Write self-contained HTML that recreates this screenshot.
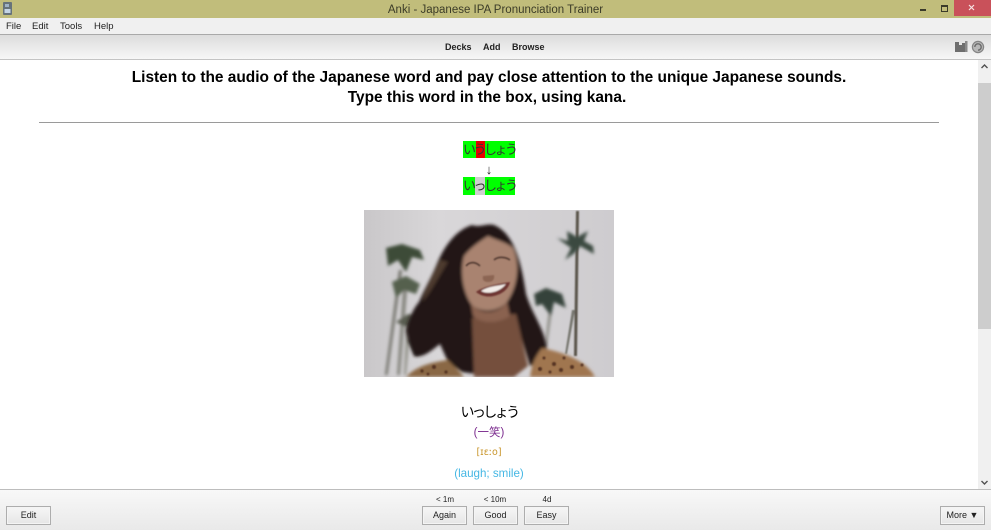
<!DOCTYPE html>
<html lang="en"><head><meta charset="utf-8"><title>Anki - Japanese IPA Pronunciation Trainer</title>
<style>
html,body{margin:0;padding:0;background:#fff}
body{width:991px;height:530px;position:relative;overflow:hidden;font-family:"Liberation Sans",sans-serif;color:#000}
.a{position:absolute;white-space:nowrap}
.c{position:absolute;left:0;width:978px;text-align:center;white-space:nowrap}
#title{left:0;top:0;width:991px;height:18px;background:#c1bd7b}
#menu{left:0;top:18px;width:991px;height:16px;background:#f0f0f0;border-bottom:1px solid #a9a9a9;font-size:9.5px;color:#222}
#tool{left:0;top:35px;width:991px;height:24px;background:linear-gradient(#dcdcdc,#f7f7f7);border-bottom:1px solid #c4c4c4}
.btn{position:absolute;top:506px;height:17px;border:1px solid #adadad;background:linear-gradient(#f6f6f6,#e6e6e6);font-size:9px;line-height:17px;text-align:center;color:#222;box-shadow:inset 0 0 0 1px #f4f4f4}
.t{position:absolute;top:495px;font-size:8px;color:#222;width:46px;text-align:center}
.k{font-family:"Liberation Sans","Noto Sans CJK JP",sans-serif}
</style></head><body>
<div class="a" id="title"></div>
<svg class="a" style="left:2px;top:2px" width="11" height="13"><rect x="1" y="0" width="9" height="13" rx="1" fill="#66727a"/><rect x="2.5" y="7" width="6" height="4" fill="#c4d4e4"/><rect x="3" y="2" width="4" height="3" fill="#9fb2c6"/></svg>
<div class="a" style="left:0;width:991px;top:3px;text-align:center;font-size:11.5px;color:#3c3c28;line-height:14px">Anki - Japanese IPA Pronunciation Trainer</div>
<div class="a" style="left:920px;top:9px;width:6px;height:1.5px;background:#3a3a2a"></div>
<div class="a" style="left:941px;top:5px;width:5px;height:4px;border:1px solid #3a3a2a;border-top-width:2px"></div>
<div class="a" style="left:954px;top:0;width:37px;height:16px;background:#c9515a"></div>
<svg class="a" style="left:967px;top:3px" width="9" height="9"><path d="M2 2L7 7M7 2L2 7" stroke="#f6e4e4" stroke-width="1.2"/></svg>

<div class="a" id="menu">
<span class="a" style="left:6px;top:3px">File</span><span class="a" style="left:32px;top:3px">Edit</span><span class="a" style="left:60px;top:3px">Tools</span><span class="a" style="left:94px;top:3px">Help</span>
</div>
<div class="a" id="tool">
<b class="a" style="left:445px;top:7px;font-size:9px;color:#222">Decks</b>
<b class="a" style="left:483px;top:7px;font-size:9px;color:#222">Add</b>
<b class="a" style="left:512px;top:7px;font-size:9px;color:#222">Browse</b>
<svg class="a" style="left:954px;top:5px" width="34" height="14"><path d="M1 2h4v10H1zM5 5h3v7H5zM8 3h3v9H8z" fill="#6e6e6e"/><path d="M11 1h2.500v11H11z" fill="#8a8a8a"/><circle cx="24" cy="7" r="5.600" fill="#b8b8b8" stroke="#858585" stroke-width="1.2"/><path d="M20.800 7a3.200 3.200 0 1 1 3.200 3.200" fill="none" stroke="#6a6a6a" stroke-width="1.4"/></svg>
</div>

<div class="a" style="left:978px;top:60px;width:13px;height:429px;background:#f0f0f0"></div>
<div class="a" style="left:978px;top:83px;width:13px;height:246px;background:#cdcdcd"></div>
<svg class="a" style="left:980px;top:63px" width="9" height="7"><path d="M1.5 5L4.5 2L7.5 5" fill="none" stroke="#505050" stroke-width="1.4"/></svg>
<svg class="a" style="left:980px;top:479px" width="9" height="7"><path d="M1.5 2L4.5 5L7.5 2" fill="none" stroke="#505050" stroke-width="1.4"/></svg>

<div class="c" style="top:68px;font-size:15.45px;font-weight:bold;line-height:20px">Listen to the audio of the Japanese word and pay close attention to the unique Japanese sounds.<br><span style="position:relative;left:-2px">Type this word in the box, using kana.</span></div>
<div class="a" style="left:39px;top:122px;width:900px;height:1px;background:#9a9a9a"></div>

<div class="a k" style="left:463px;top:141px;height:17px;width:52px;background:#00ff00;font-size:13px;line-height:17px;color:#333"><span class="a" style="left:13px;top:0;width:9px;height:17px;background:#e60000"></span><span class="a" style="left:0;top:0;letter-spacing:-2.5px">いうしょう</span></div>
<div class="c k" style="top:162px;font-size:13px;line-height:15px;color:#222">↓</div>
<div class="a k" style="left:463px;top:177px;height:18px;width:52px;background:#00ff00;font-size:13px;line-height:18px;color:#333"><span class="a" style="left:12px;top:0;width:10px;height:18px;background:#cfcfcf"></span><span class="a" style="left:0;top:0;letter-spacing:-2.5px">いっしょう</span></div>

<svg class="a" style="left:364px;top:210px" width="250" height="167" viewBox="0 0 250 167">
<defs><filter id="b" x="-20%" y="-20%" width="140%" height="140%"><feGaussianBlur stdDeviation="1.6"/></filter>
<filter id="b2" x="-20%" y="-20%" width="140%" height="140%"><feGaussianBlur stdDeviation=".8"/></filter>
<linearGradient id="sky" x1="0" y1="0" x2="1" y2="0"><stop offset="0" stop-color="#c9c7c9"/><stop offset=".3" stop-color="#d9d7d9"/><stop offset="1" stop-color="#cecccf"/></linearGradient></defs>
<rect width="250" height="167" fill="url(#sky)"/>
<g filter="url(#b)">
<path d="M35 60L21 165h2.500L38 60z" fill="#6e6e66"/><path d="M39 80L33 165h3L43 80z" fill="#82827a"/><path d="M43 110L40 165h2L47 110z" fill="#8c8c82"/>
<path d="M22 38L38 34L56 40L60 50L48 47L42 62L34 50L24 56z" fill="#3e4c38"/>
<path d="M28 72L42 66L56 74L52 84L40 80L32 88z" fill="#54604e"/>
<path d="M32 112L44 104L58 108L52 118L40 116z" fill="#585c50"/>
<path d="M44 130L58 122L64 138L52 146z" fill="#4e5148"/>
<path d="M186 92L181 135h2L189 92z" fill="#84847b"/>
<path d="M170 84L182 78L198 84L202 98L190 92L187 106L178 94L172 96z" fill="#36423a"/>
</g>
<g filter="url(#b2)">
<path d="M212 1L210 146h3L215 1z" fill="#5a544c"/><path d="M208 100L201 144h2L211 100z" fill="#76766e"/>
</g>
<g filter="url(#b)">
<path d="M193 28L204 31L203 21L213 27L224 21L220 31L229 36L230 44L216 36L212 42L201 50L207 38z" fill="#3b4a40"/>
<path d="M108 15C92 20 80 36 72 56C66 70 60 80 55 92C48 100 44 112 42 120C44 132 48 140 50 146C60 148 68 140 76 134L84 152L98 162L112 164L118 120L150 120L158 130L166 156L176 152L183 138C180 118 168 104 162 84C158 58 152 24 130 15C122 13 116 18 108 15Z" fill="#211917"/>
<path d="M76 50C68 66 62 78 58 92C66 84 74 68 84 52Z" fill="#4e3a2e"/>
<path d="M108 108L110 167H150L164 156L152 104Z" fill="#74503e"/>
<path d="M100 46C108 36 118 30 124 26C132 30 142 32 149 38C156 54 154 76 143 92C132 104 114 102 107 94C98 80 96 60 100 46Z" fill="#a98370"/>
<path d="M107 94C116 104 132 106 143 92L146 106C134 114 118 114 109 106Z" fill="#8a6250"/>
<path d="M42 167C52 156 68 152 84 150C90 156 96 162 100 167Z" fill="#8a6844"/>
<path d="M166 167C168 152 172 146 178 138C198 142 222 150 231 167Z" fill="#a07650"/>
</g>
<g filter="url(#b2)">
<path d="M102 56C106 51 112 52 116 56M130 50C134 46 142 47 146 50" fill="none" stroke="#4a332a" stroke-width="1.500"/>
<path d="M119 66C118 70 120 72 124 72C128 72 131 70 130 65" fill="#8c6552"/>
<path d="M112 82C120 76 134 74 146 72C144 84 124 92 112 82Z" fill="#6e3430"/>
<path d="M117 81C124 76 134 76 142 74C136 82 124 85 117 81Z" fill="#f2ece8"/>
<g fill="#553320"><circle cx="180" cy="148" r="1.5"/><circle cx="190" cy="154" r="2"/><circle cx="200" cy="148" r="1.5"/><circle cx="208" cy="157" r="2"/><circle cx="218" cy="155" r="1.5"/><circle cx="176" cy="159" r="2"/><circle cx="186" cy="162" r="1.5"/><circle cx="197" cy="160" r="2"/><circle cx="58" cy="161" r="1.600"/><circle cx="70" cy="157" r="2"/><circle cx="82" cy="162" r="1.6"/><circle cx="64" cy="164" r="1.4"/></g>
</g>
</svg>

<div class="c k" style="top:402px;font-size:14px;line-height:20px;letter-spacing:-2.6px">いっしょう</div>
<div class="c k" style="top:425px;font-size:11.5px;line-height:16px;color:#7b2b8e">(一笑)</div>
<div class="c" style="top:445px;line-height:16px;color:#c8952a;font-family:'DejaVu Sans',sans-serif;font-size:9.500px">[ɪɛːo]</div>
<div class="c" style="top:466px;font-size:11.6px;line-height:16px;color:#45b7e4">(laugh; smile)</div>

<div class="a" style="left:0;top:489px;width:991px;height:41px;background:linear-gradient(#f8f8f8,#e9e9e9);border-top:1px solid #bdbdbd;box-sizing:border-box"></div>
<div class="t" style="left:422px">&lt; 1m</div><div class="t" style="left:472px">&lt; 10m</div><div class="t" style="left:524px">4d</div>
<div class="btn" style="left:6px;width:43px">Edit</div>
<div class="btn" style="left:422px;width:43px">Again</div>
<div class="btn" style="left:473px;width:43px">Good</div>
<div class="btn" style="left:524px;width:43px">Easy</div>
<div class="btn" style="left:940px;width:43px">More ▼</div>
</body></html>
